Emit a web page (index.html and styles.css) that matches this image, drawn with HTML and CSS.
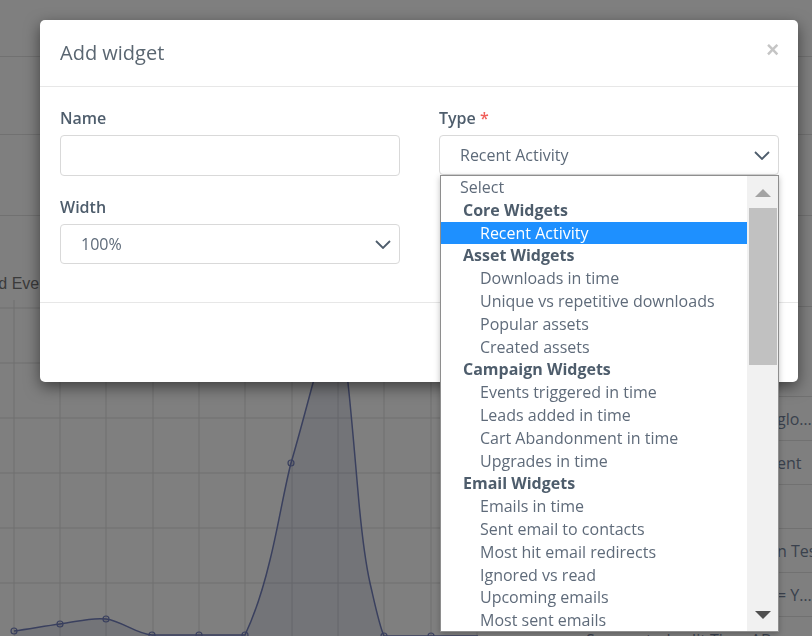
FILE: index.html
```html
<!DOCTYPE html>
<html lang="en">
<head>
  <meta charset="UTF-8" />
  <meta name="viewport" content="width=device-width, initial-scale=1.0"/>
  <title>Dashboard - Add widget</title>
  <link rel="stylesheet" href="styles.css">
</head>
<body>
  <div class="page">
    <div class="page-bar"></div>
    <div class="page-row row-a"></div>
    <div class="page-row row-b"></div>
    <div class="dash">
      <div class="chart-panel">
        <div class="legend"><span class="legend-item">Read Events</span></div>
        <svg class="chart" viewBox="0 296 478 344" width="478" height="344">
          <g class="grid">
            <line x1="14" y1="300" x2="14" y2="640"/>
            <line x1="60" y1="300" x2="60" y2="640"/>
            <line x1="106" y1="300" x2="106" y2="640"/>
            <line x1="153" y1="300" x2="153" y2="640"/>
            <line x1="199" y1="300" x2="199" y2="640"/>
            <line x1="245" y1="300" x2="245" y2="640"/>
            <line x1="292" y1="300" x2="292" y2="640"/>
            <line x1="338" y1="300" x2="338" y2="640"/>
            <line x1="384" y1="300" x2="384" y2="640"/>
            <line x1="431" y1="300" x2="431" y2="640"/>
            <line x1="477" y1="300" x2="477" y2="640"/>
            <line x1="0" y1="308" x2="478" y2="308"/>
            <line x1="0" y1="363" x2="478" y2="363"/>
            <line x1="0" y1="418" x2="478" y2="418"/>
            <line x1="0" y1="473" x2="478" y2="473"/>
            <line x1="0" y1="528" x2="478" y2="528"/>
            <line x1="0" y1="583" x2="478" y2="583"/>
          </g>
          <path class="area" d="M14,631 C29,629 45,626 60,624 C76,622 91,617 106,619 C122,621 136,634 152,635 L245,635 C254,616 264,585 270,560 C278,528 284,490 291,463 C299,436 307,405 313,383 C321,352 328,300 332,260 C336,300 344,350 348,383 C352,420 356,470 359,503 C362,535 366,565 370,583 C374,600 379,625 384,636 L478,636 L478,640 L14,640 Z"/>
          <path class="line" d="M14,631 C29,629 45,626 60,624 C76,622 91,617 106,619 C122,621 136,634 152,635 L245,635 C254,616 264,585 270,560 C278,528 284,490 291,463 C299,436 307,405 313,383 C321,352 328,300 332,260 C336,300 344,350 348,383 C352,420 356,470 359,503 C362,535 366,565 370,583 C374,600 379,625 384,636 L478,636"/>
          <g class="dots">
            <circle cx="14" cy="631" r="3"/>
            <circle cx="60" cy="624" r="3"/>
            <circle cx="106" cy="619" r="3"/>
            <circle cx="152" cy="635" r="3"/>
            <circle cx="199" cy="635" r="3"/>
            <circle cx="245" cy="635" r="3"/>
            <circle cx="291" cy="463" r="3"/>
            <circle cx="384" cy="636" r="3"/>
            <circle cx="431" cy="636" r="3"/>
          </g>
        </svg>
      </div>
      <div class="list-panel">
        <div class="list-head"></div>
        <div class="list-sub"></div>
        <div class="list-row"><span></span><span>glo…</span></div>
        <div class="list-row"><span></span><span>ent</span></div>
        <div class="list-row"><span></span><span></span></div>
        <div class="list-row"><span></span><span>n Tes</span></div>
        <div class="list-row"><span></span><span>= Y…</span></div>
        <div class="list-row last"><span>Segmented split Time AB</span><span></span></div>
      </div>
    </div>
  </div>

  <div class="backdrop"></div>

  <div class="modal">
    <div class="modal-header">
      <h4 class="modal-title">Add widget</h4>
      <span class="close">&times;</span>
    </div>
    <div class="modal-body">
      <div class="col">
        <div class="form-group">
          <label class="control-label">Name</label>
          <div class="form-control"></div>
        </div>
        <div class="form-group">
          <label class="control-label">Width</label>
          <div class="form-control select">
            <span class="select-value">100%</span>
            <svg class="chevron" width="16" height="9" viewBox="0 0 16 9"><polyline points="1,1 8,8 15,1"/></svg>
          </div>
        </div>
      </div>
      <div class="col">
        <div class="form-group">
          <label class="control-label">Type <span class="required">*</span></label>
          <div class="form-control select">
            <span class="select-value">Recent Activity</span>
            <svg class="chevron" width="16" height="9" viewBox="0 0 16 9"><polyline points="1,1 8,8 15,1"/></svg>
          </div>
        </div>
      </div>
    </div>
    <div class="modal-footer"></div>
  </div>

  <div class="dropdown">
    <ul class="options">
      <li class="opt top">Select</li>
      <li class="group">Core Widgets</li>
      <li class="opt active">Recent Activity</li>
      <li class="group">Asset Widgets</li>
      <li class="opt">Downloads in time</li>
      <li class="opt">Unique vs repetitive downloads</li>
      <li class="opt">Popular assets</li>
      <li class="opt">Created assets</li>
      <li class="group">Campaign Widgets</li>
      <li class="opt">Events triggered in time</li>
      <li class="opt">Leads added in time</li>
      <li class="opt">Cart Abandonment in time</li>
      <li class="opt">Upgrades in time</li>
      <li class="group">Email Widgets</li>
      <li class="opt">Emails in time</li>
      <li class="opt">Sent email to contacts</li>
      <li class="opt">Most hit email redirects</li>
      <li class="opt">Ignored vs read</li>
      <li class="opt">Upcoming emails</li>
      <li class="opt">Most sent emails</li>
    </ul>
    <div class="scrollbar">
      <span class="arrow up"></span>
      <span class="thumb"></span>
      <span class="arrow down"></span>
    </div>
  </div>
</body>
</html>
```
FILE: styles.css
```css
* { box-sizing: border-box; }
body {
  margin: 0;
  width: 812px;
  height: 636px;
  overflow: hidden;
  background-color: #fff;
  font-family: "Open Sans", sans-serif;
}

/* dashboard behind the modal */
.page {
  width: 812px;
}
.page-bar {
  height: 57px;
  border-bottom: 1px solid #e2e2e2;
}
.page-row.row-a {
  height: 78px;
  border-bottom: 1px solid #e2e2e2;
}
.page-row.row-b {
  height: 81px;
  border-bottom: 1px solid #e2e2e2;
}
.dash {
  display: flex;
}
.chart-panel {
  width: 478px;
}
.legend {
  height: 80px;
  display: flex;
  align-items: flex-end;
  padding-bottom: 2px;
}
.legend-item {
  margin-left: -31px;
  font-family: "Liberation Sans", Arial, sans-serif;
  font-size: 16px;
  line-height: 20px;
  color: #777;
}
.chart {
  display: block;
}
.grid line {
  stroke: #dedede;
  stroke-width: 1;
}
.area {
  fill: rgba(78, 93, 157, 0.14);
}
.line {
  fill: none;
  stroke: #7480bd;
  stroke-width: 1.5;
}
.dots circle {
  fill: rgba(78, 93, 157, 0.1);
  stroke: #7480bd;
  stroke-width: 1.2;
}
.list-panel {
  flex: 1;
}
.list-head {
  height: 91px;
  border-bottom: 1px solid #e2e2e2;
}
.list-sub {
  height: 90px;
  border-bottom: 1px solid #e2e2e2;
}
.list-row {
  height: 44px;
  display: grid;
  grid-template-columns: 299px 1fr;
  align-items: center;
  border-bottom: 1px solid #e2e2e2;
  font-size: 16px;
  color: #74839a;
  white-space: nowrap;
  overflow: hidden;
}
.list-row.last {
  align-items: start;
  padding-top: 12px;
}
.list-row.last span:first-child {
  padding-left: 108px;
}

.backdrop {
  position: fixed;
  inset: 0;
  background-color: rgba(0, 0, 0, 0.5);
}

/* modal */
.modal {
  position: absolute;
  left: 40px;
  top: 20px;
  width: 758px;
  background-color: #fff;
  border-radius: 5px;
  box-shadow: 0 5px 15px rgba(0, 0, 0, 0.5);
}
.modal-header {
  height: 67px;
  display: flex;
  align-items: center;
  justify-content: space-between;
  padding: 0 20px;
  border-bottom: 1px solid #e7e7e7;
}
.modal-title {
  margin: 0;
  font-size: 20px;
  font-weight: normal;
  color: #5a6671;
  padding-bottom: 1px;
}
.close {
  font-family: "Liberation Sans", Arial, sans-serif;
  font-size: 22px;
  font-weight: bold;
  color: #c5c5c5;
  margin-top: -6px;
  margin-right: -1px;
}
.modal-body {
  display: grid;
  grid-template-columns: 1fr 1fr;
  column-gap: 39px;
  padding: 20px 19px 38px 20px;
  border-bottom: 1px solid #e7e7e7;
}
.form-group {
  margin-bottom: 20px;
}
.form-group:last-child {
  margin-bottom: 0;
}
.control-label {
  display: block;
  font-size: 16px;
  line-height: 22px;
  font-weight: 600;
  color: #4e5d6c;
  margin-bottom: 6px;
}
.required {
  color: #f0605b;
}
.form-control {
  height: 41px;
  border: 1px solid #d9d9d9;
  border-radius: 4px;
}
.form-control.select {
  height: 40px;
  display: flex;
  align-items: center;
  justify-content: space-between;
  padding: 0 8px 0 20px;
  font-size: 16px;
  color: #5d6a79;
}
.chevron polyline {
  fill: none;
  stroke: #4e5d6c;
  stroke-width: 1.8;
}
.modal-footer {
  height: 79px;
}

/* open list of the Type select */
.dropdown {
  position: absolute;
  left: 440px;
  top: 175px;
  width: 339px;
  height: 457px;
  display: flex;
  background-color: #fff;
  border: 1px solid #8e8e8e;
  box-shadow: 0 2px 6px rgba(0, 0, 0, 0.25);
}
.options {
  flex: 1;
  margin: 0;
  padding: 0;
  list-style: none;
  font-size: 16px;
}
.options li {
  height: 22.8px;
  line-height: 22.8px;
  white-space: nowrap;
}
.opt {
  padding-left: 39px;
  color: #5f6b7a;
}
.opt.top {
  padding-left: 19px;
}
.opt.active {
  background-color: #1e90ff;
  color: #fff;
}
.group {
  padding-left: 22px;
  font-weight: 700;
  color: #4e5d6c;
}
.scrollbar {
  width: 31px;
  background-color: #f1f1f1;
  display: flex;
  flex-direction: column;
  align-items: center;
}
.arrow {
  width: 0;
  height: 0;
  border-left: 8px solid transparent;
  border-right: 8px solid transparent;
}
.arrow.up {
  margin-top: 13px;
  border-bottom: 8px solid #a3a3a3;
}
.thumb {
  width: 28px;
  height: 157px;
  margin-top: 11px;
  background-color: #c1c1c1;
}
.arrow.down {
  margin-top: auto;
  margin-bottom: 12px;
  border-top: 8px solid #505050;
}
```
